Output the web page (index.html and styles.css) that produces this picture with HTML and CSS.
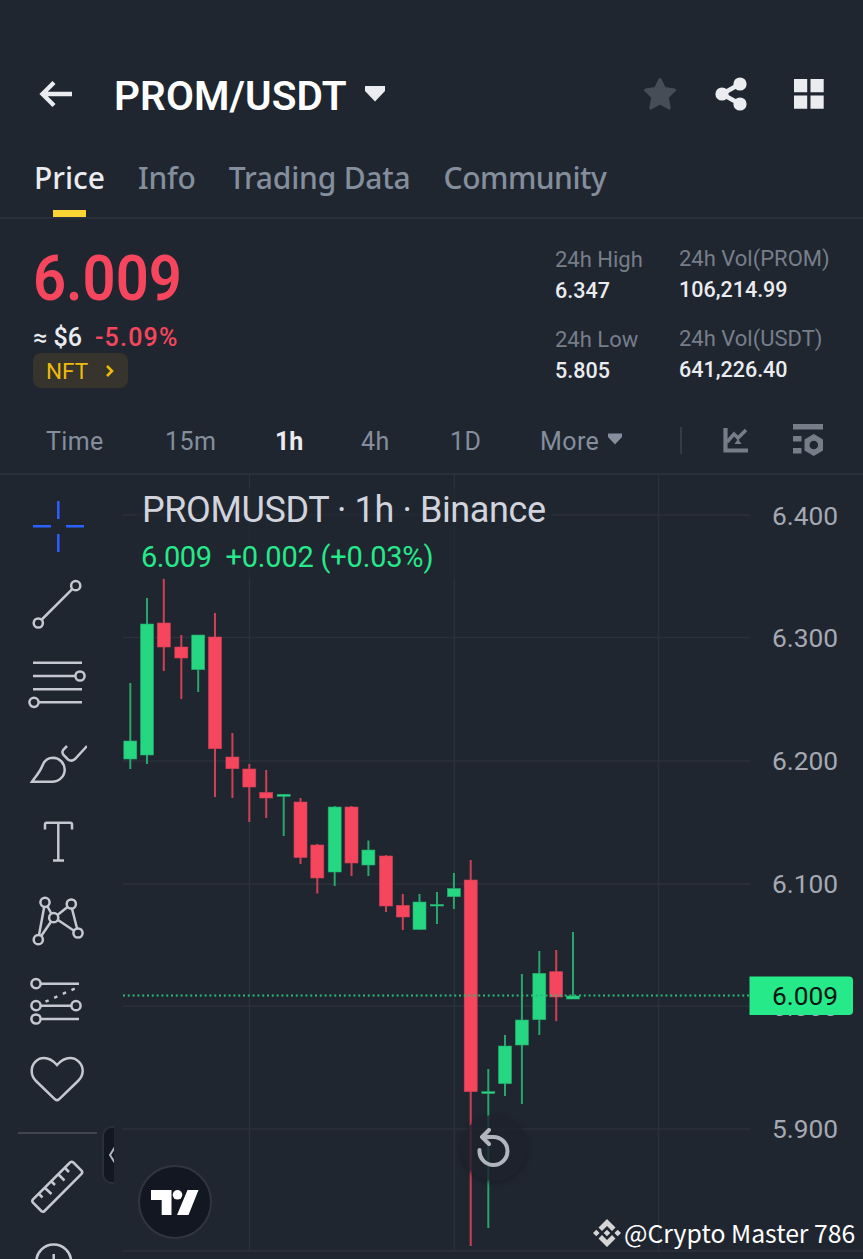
FILE: index.html
```html
<!DOCTYPE html>
<html lang="en">
<head>
    <meta charset="UTF-8">
    <meta name="viewport" content="width=device-width, initial-scale=1.0">
    <title>PROM/USDT</title>
    <link rel="stylesheet" href="styles.css">
</head>
<body>
    <header class="top-bar">
        <svg class="back-icon" width="34" height="28" viewBox="0 0 34 28"><path d="M33 14H4M15 2.5L3.5 14L15 25.5" fill="none" stroke="#eaecef" stroke-width="4.4"/></svg>
        <h1>PROM/USDT</h1>
        <svg class="caret" width="22" height="18" viewBox="0 0 22 18"><path d="M1 1H21V6L11 16.5L1 6Z" fill="#eaecef"/></svg>
        <div class="top-actions">
            <svg width="34" height="34" viewBox="0 0 34 34"><path d="M17 2.500L21.300 11.500L31.500 13L24.200 20.200L26.200 31L17 26L7.800 31L9.800 20.200L2.500 13L12.700 11.500Z" fill="#474d57" stroke="#474d57" stroke-width="3" stroke-linejoin="round"/></svg>
            <svg width="34" height="34" viewBox="0 0 34 34"><path d="M26 7L8 17L26 27" fill="none" stroke="#eaecef" stroke-width="4.500"/><g fill="#eaecef"><circle cx="26" cy="7" r="6.600"/><circle cx="8" cy="17" r="6.600"/><circle cx="26" cy="27" r="6.600"/></g></svg>
            <svg width="32" height="32" viewBox="0 0 32 32"><path d="M1 1H14.200V14.200H1ZM17.500 1H30.700V14.200H17.500ZM1 17.500H14.200V30.700H1ZM17.500 17.500H30.700V30.700H17.500Z" fill="#eaecef"/></svg>
        </div>
    </header>

    <nav class="tabs">
        <a class="tab active">Price</a>
        <a class="tab">Info</a>
        <a class="tab">Trading Data</a>
        <a class="tab">Community</a>
    </nav>

    <section class="summary">
        <div class="price-block">
            <div class="last-price">6.009</div>
            <div class="change"><span class="fiat">≈ $6</span><span class="percent">-5.09%</span></div>
            <div class="tag">NFT<svg width="10" height="14" viewBox="0 0 10 14"><path d="M2 2L7 7L2 12" fill="none" stroke="#f0b90b" stroke-width="2.600"/></svg></div>
        </div>
        <div class="stats">
            <div class="stat"><span class="label">24h High</span><span class="value">6.347</span></div>
            <div class="stat"><span class="label">24h Low</span><span class="value">5.805</span></div>
        </div>
        <div class="stats volume">
            <div class="stat"><span class="label">24h Vol(PROM)</span><span class="value">106,214.99</span></div>
            <div class="stat"><span class="label">24h Vol(USDT)</span><span class="value">641,226.40</span></div>
        </div>
    </section>

    <div class="intervals">
        <span>Time</span>
        <span>15m</span>
        <span class="active">1h</span>
        <span>4h</span>
        <span>1D</span>
        <span>More<svg class="more-caret" width="14" height="12" viewBox="0 0 14 12"><path d="M0 .5H14V4L7 11.500L0 4Z" fill="#848e9c"/></svg></span>
        <i class="divider"></i>
        <svg width="26" height="27" viewBox="0 0 26 27"><g fill="none" stroke="#777d88"><path d="M2.500 1V23.500H25" stroke-width="4.200"/><path d="M4 15L11 7L15 11L23 3" stroke-width="3.500"/></g><path d="M15 12L18.500 17H11.500Z" fill="#777d88"/></svg>
        <svg width="32" height="34" viewBox="0 0 32 34"><path d="M1 1H31V6.500H1ZM1 13H9.500V18.500H1ZM1 25H9.500V30.500H1Z" fill="#777d88"/><path fill-rule="evenodd" d="M21.800 11L31 16.500V27.500L21.800 33L12.500 27.500V16.500ZM21.800 17.700A4.300 4.300 0 1 0 21.800 26.300A4.300 4.300 0 1 0 21.800 17.700Z" fill="#777d88"/></svg>
    </div>

    <main class="chart-area">
        <aside class="tools">
            <svg class="tool selected" viewBox="0 0 60 79"><path d="M31.300 14V32M31.300 47V65M6 39.300H24M39 39.300H57"/></svg>
            <svg class="tool" viewBox="0 0 60 79"><circle cx="48.700" cy="19.700" r="4.600"/><circle cx="11.300" cy="57" r="4.600"/><path d="M14.800 53.500L45.200 23.200"/></svg>
            <svg class="tool" viewBox="0 0 60 79"><path d="M6 17.700H55M6 31H48M6 44.300H55M12 57.300H55"/><circle cx="53" cy="31" r="4.600"/><circle cx="7" cy="57.300" r="4.600"/></svg>
            <svg class="tool" viewBox="0 0 60 79"><path d="M5 57.700H25A12.500 12 0 0 0 37.700 45.500A12 12 0 0 0 26 33.700C20 33.700 17.200 37 15.500 41.500C12.500 49 8 53 5 57.700ZM40 22L36.500 25.500Q34.300 28 36.500 31L41 35.500Q44.500 38 48 35L60 22"/></svg>
            <svg class="tool" viewBox="0 0 60 79"><path d="M18 26.500V21.500Q18 19.700 19.800 19.700H43.200Q45 19.700 45 21.500V26.500M31.300 19.700V57.500M26 57.500H37"/></svg>
            <svg class="tool" viewBox="0 0 60 79"><circle cx="18" cy="20.300" r="4.600"/><circle cx="44.300" cy="22" r="4.600"/><circle cx="26.700" cy="35.700" r="4.600"/><circle cx="51" cy="51" r="4.600"/><circle cx="11.300" cy="57.700" r="4.600"/><path d="M17.200 25L12 53M20.500 24.500L24.300 31.500M40.500 25L30.500 33M45 26.700L50 46.300M31 38L47 48.800M24 39.700L14.200 54"/></svg>
            <svg class="tool" viewBox="0 0 60 79"><circle cx="9" cy="22.700" r="4.600"/><circle cx="9" cy="44.700" r="4.600"/><circle cx="49" cy="44.700" r="4.600"/><circle cx="9" cy="58" r="4.600"/><path d="M14 22.700H52M14 44.700H44M14 58H52"/><path d="M18.500 40.700L49 27" stroke-dasharray="3.500 6"/></svg>
            <svg class="tool" viewBox="0 0 60 79"><path d="M30 25C26 20.500 22 18 17 18C10 18 4.700 24 4.700 31C4.700 35.500 6.500 38.500 9 41L28 59.300Q30 61 32 59.300L51 41C54 38 55.700 35 55.700 31C55.700 24 50 18 43 18C38 18 34 20.500 30 25Z"/></svg>
            <hr>
            <svg class="tool" viewBox="0 0 60 79"><path d="M43 15.500Q44.700 14 46.400 15.500L54.500 23.500Q56 25.200 54.500 27L17.500 64Q16 65.500 14.300 64L6 55.700Q4.500 54 6 52.300ZM12 47L15.500 50.500M18 41L24.500 47M24.500 34.500L28 38M31.500 27.500L37.500 33.500M38 21L42 25"/></svg>
            <svg class="tool" viewBox="0 0 60 79"><circle cx="26.700" cy="36" r="17.500"/><path d="M26.700 28V44M18.700 36H34.700"/></svg>
        </aside>
        <svg class="chart" width="740" height="786" viewBox="123 473 740 786">
            <path class="grid" d="M123 515H750M123 637.500H750M123 761H750M123 884H750M123 1006H750M123 1129H750M123 1251H863M249.500 473V1251M454.300 473V1251M658.500 473V1251"/>
            <g id="candles"></g>
            <path class="price-line" d="M123 995.500H750"/>
            <rect class="legend-bg" x="135" y="488" width="418" height="91"/>
            <text class="symbol" x="142" y="521.500" textLength="404">PROMUSDT · 1h · Binance</text>
            <text class="quote" x="141" y="566.500" textLength="71">6.009</text>
            <text class="quote" x="225.500" y="566.500" textLength="208">+0.002 (+0.03%)</text>
            <g class="axis">
                <text x="772" y="524.500">6.400</text>
                <text x="772" y="646.500">6.300</text>
                <text x="772" y="770">6.200</text>
                <text x="772" y="893">6.100</text>
                <text x="772" y="1016">6.000</text>
                <text x="772" y="1138">5.900</text>
            </g>
            <path d="M749.500 976.500H849Q853 976.500 853 980.500V1011Q853 1015 849 1015H749.500Z" fill="#26e98a"/>
            <text class="current" x="772" y="1005">6.009</text>
        </svg>
        <div class="collapse"><svg width="7" height="18" viewBox="0 0 7 18"><path d="M7 1L2 9L7 17" fill="none" stroke="#b2b5be" stroke-width="2"/></svg></div>
        <div class="tv-logo"><svg width="48" height="26" viewBox="0 0 48 26"><path d="M0 0H20.500V25H10.700V10H0ZM36.500 0H47.500L37.500 25H26Z" fill="#fff"/><circle cx="26.500" cy="4.800" r="4.800" fill="#fff"/></svg></div>
        <div class="reset"><svg width="36" height="40" viewBox="0 0 36 40"><path d="M3.500 22A14 14 0 1 0 17.500 9H7M13 2L6 9L13 16" fill="none" stroke="#b2b5be" stroke-width="4" stroke-linecap="round" stroke-linejoin="round"/></svg></div>
        <div class="watermark"><svg width="28" height="28" viewBox="0 0 28 28"><path d="M14 0L22.500 8.500L19 12L14 7L9 12L5.500 8.500ZM14 28L22.500 19.500L19 16L14 21L9 16L5.500 19.500ZM3.300 10.700L6.600 14L3.300 17.300L0 14ZM24.700 10.700L28 14L24.700 17.300L21.400 14ZM14 10.700L17.300 14L14 17.300L10.700 14Z" fill="#d5d5d5"/></svg><span>@Crypto Master 786</span></div>
    </main>

    <script>
        // x, wick top, body top, body bottom, wick bottom, direction
        const candles = [
            [130.3, 683, 741, 759, 769, 'up'],
            [147, 598, 624, 755, 764, 'up'],
            [163.8, 579, 623, 647, 671, 'down'],
            [181.3, 635, 647, 658, 699, 'down'],
            [198.2, 635, 635, 669.7, 692, 'up'],
            [215, 613, 637, 748.7, 797, 'down'],
            [232.4, 733, 757, 768.7, 798, 'down'],
            [249.3, 764, 769, 787, 822, 'down'],
            [266.2, 770, 792.5, 798, 818, 'down'],
            [283.7, 794, 794.3, 796.3, 836, 'up'],
            [300.5, 798, 802, 857.5, 864, 'down'],
            [317.3, 844, 845, 878, 893.5, 'down'],
            [334.7, 806, 807, 872, 886, 'up'],
            [351.5, 806, 807, 863, 876, 'down'],
            [368.4, 840.5, 850, 865, 876, 'up'],
            [386, 855, 856, 906, 912, 'down'],
            [402.8, 894, 905.3, 917, 930, 'down'],
            [419.5, 894, 902, 929.5, 930, 'up'],
            [437, 892, 904.5, 906, 924, 'up'],
            [453.9, 873, 888.5, 896.7, 909, 'up'],
            [470.7, 860, 880, 1091.7, 1246, 'down'],
            [488.3, 1069, 1091.7, 1093.5, 1228, 'up'],
            [505, 1035, 1046, 1083.7, 1096, 'up'],
            [521.9, 974, 1020, 1045, 1104, 'up'],
            [539.3, 951, 973.3, 1019.7, 1035, 'up'],
            [556.2, 950, 971.7, 997, 1021, 'down'],
            [573, 932, 996, 999, 999, 'up']
        ];

        document.getElementById('candles').innerHTML = candles.map(([x, high, top, bottom, low, dir]) => `
            <path class="wick ${dir}" d="M${x} ${high}V${low}"/>
            <rect class="${dir}" x="${x - 6.5}" y="${top}" width="13" height="${bottom - top}"/>`).join('');
    </script>
</body>
</html>
```

FILE: styles.css
```css
:root {
    --bg: #202630;
    --line: #2a3039;
    --muted: #848e9c;
    --text: #eaecef;
    --up: #26d782;
    --down: #f6465d;
}

* {
    box-sizing: border-box;
}

body {
    margin: 0;
    height: 1259px;
    overflow: hidden;
    background-color: var(--bg);
    color: var(--text);
    font-family: Roboto, "Liberation Sans", sans-serif;
}

svg {
    display: block;
    flex: none;
}

.top-bar {
    display: flex;
    align-items: center;
    height: 136px;
    padding: 52px 38px 0 39px;
}

.top-bar h1 {
    margin: 4px 0 0 41px;
    width: 233px;
    font-size: 40.5px;
    font-weight: 600;
    letter-spacing: 0.1px;
    white-space: nowrap;
    color: #fff;
}

.caret {
    margin-left: 17px;
}

.top-actions {
    display: flex;
    align-items: center;
    gap: 37px;
    margin-left: auto;
}

.top-actions svg:last-child {
    margin-left: 8px;
}

.tabs {
    display: flex;
    height: 83px;
    padding-left: 34px;
    border-bottom: 2px solid var(--line);
}

.tab {
    position: relative;
    margin-right: 33px;
    font-family: "Noto Sans", sans-serif;
    font-size: 30px;
    font-weight: 500;
    letter-spacing: -0.2px;
    line-height: 83px;
    white-space: nowrap;
    color: var(--muted);
}

.tab:last-child {
    letter-spacing: -0.5px;
}

.tab.active {
    letter-spacing: 0;
    color: var(--text);
}

.tab.active::after {
    content: "";
    position: absolute;
    left: 19px;
    bottom: 0;
    width: 33px;
    height: 7px;
    background-color: #fcd535;
}

.summary {
    display: flex;
    height: 188px;
    padding: 25px 0 0 33px;
}

.price-block {
    width: 522px;
}

.last-price {
    width: 160px;
    height: 74px;
    font-size: 63px;
    font-weight: 600;
    line-height: 69px;
    color: var(--down);
    transform: scaleX(0.92);
    transform-origin: left;
}

.change {
    height: 35px;
    font-size: 25px;
    font-weight: 500;
    line-height: 40px;
}

.percent {
    margin-left: 13px;
    letter-spacing: 1.2px;
    color: var(--down);
}

.tag {
    display: flex;
    align-items: center;
    width: 95px;
    height: 35px;
    padding-left: 13px;
    border-radius: 8px;
    background-color: #36342c;
    color: #f0b90b;
    font-size: 22.5px;
}

.tag svg {
    margin-left: 17px;
}

.stats {
    width: 124px;
    white-space: nowrap;
}

.stats.volume {
    margin-top: -1px;
}

.stat {
    display: flex;
    flex-direction: column;
    height: 80px;
    font-size: 22px;
    line-height: 31px;
}

.label {
    color: #777e8a;
}

.value {
    font-size: 21.5px;
    font-weight: 500;
    color: var(--text);
}

.intervals {
    display: grid;
    grid-template-columns: 119px 110px 86px 89px 90px 140px 43px 69px 32px;
    align-items: center;
    height: 68px;
    padding-left: 46px;
    border-bottom: 2px solid var(--line);
    font-size: 25px;
    letter-spacing: 0.4px;
    color: var(--muted);
}

.intervals span {
    padding-top: 3px;
}

.intervals .active {
    font-weight: 700;
    letter-spacing: 0;
    color: var(--text);
}

.more-caret {
    display: inline-block;
    margin-left: 9px;
    vertical-align: 5px;
}

.divider {
    width: 2px;
    height: 27px;
    background-color: #353b45;
}

.chart-area {
    position: relative;
    display: flex;
    height: 785px;
    margin-top: -1px;
}

.tools {
    width: 123px;
    padding: 13px 0 0 27px;
}

.tool {
    display: block;
    width: 60px;
    height: 79px;
    fill: none;
    stroke: #c5c8d0;
    stroke-width: 2.5;
}

.tool.selected {
    stroke: #2962ff;
}

.tools hr {
    width: 79px;
    height: 2px;
    margin: 13px 0 13px -9px;
    border: none;
    background-color: #40454e;
}

.chart {
    margin-top: -1px;
}

.grid {
    fill: none;
    stroke: #2b313a;
    stroke-width: 1.5;
}

.up {
    fill: var(--up);
    stroke: #27a76c;
    stroke-width: 0.6;
}

.down {
    fill: var(--down);
    stroke: #cf4055;
    stroke-width: 0.6;
}

.wick {
    stroke-width: 2;
}

.price-line {
    stroke: #28b975;
    stroke-width: 2;
    stroke-dasharray: 2 2.8;
}

.legend-bg {
    fill: var(--bg);
    opacity: 0.6;
}

.symbol {
    font-size: 36px;
    fill: #d1d4dc;
}

.quote {
    font-size: 29px;
    fill: #26e98a;
}

.axis text,
.current {
    font-size: 26.3px;
}

.axis text {
    fill: #a5a9b3;
}

.current {
    fill: #0b1512;
}

.collapse {
    position: absolute;
    left: 102px;
    top: 652px;
    width: 12px;
    height: 58px;
    padding: 18px 0 0 4px;
    overflow: hidden;
    border: 2px solid #2a2f3a;
    border-right: none;
    border-radius: 10px 0 0 10px;
    background-color: #131722;
}

.tv-logo {
    position: absolute;
    left: 138px;
    top: 691px;
    display: grid;
    place-items: center;
    width: 74px;
    height: 74px;
    border: 2px solid #30353f;
    border-radius: 50%;
    background-color: #131722;
}

.tv-logo svg {
    margin-top: 2px;
}

.reset {
    position: absolute;
    left: 461px;
    top: 641px;
    display: grid;
    place-items: center;
    width: 66px;
    height: 66px;
    border-radius: 50%;
    background-color: rgba(30, 34, 45, 0.8);
    box-shadow: 0 2px 5px rgba(19, 23, 34, 0.6);
}

.watermark {
    position: absolute;
    left: 593px;
    top: 742px;
    display: flex;
    align-items: center;
    gap: 3px;
    font-family: "Noto Sans CJK SC", sans-serif;
    font-size: 24.8px;
    line-height: 36px;
    white-space: nowrap;
    color: #fff;
}

.watermark span {
    margin-top: -2px;
}
```
